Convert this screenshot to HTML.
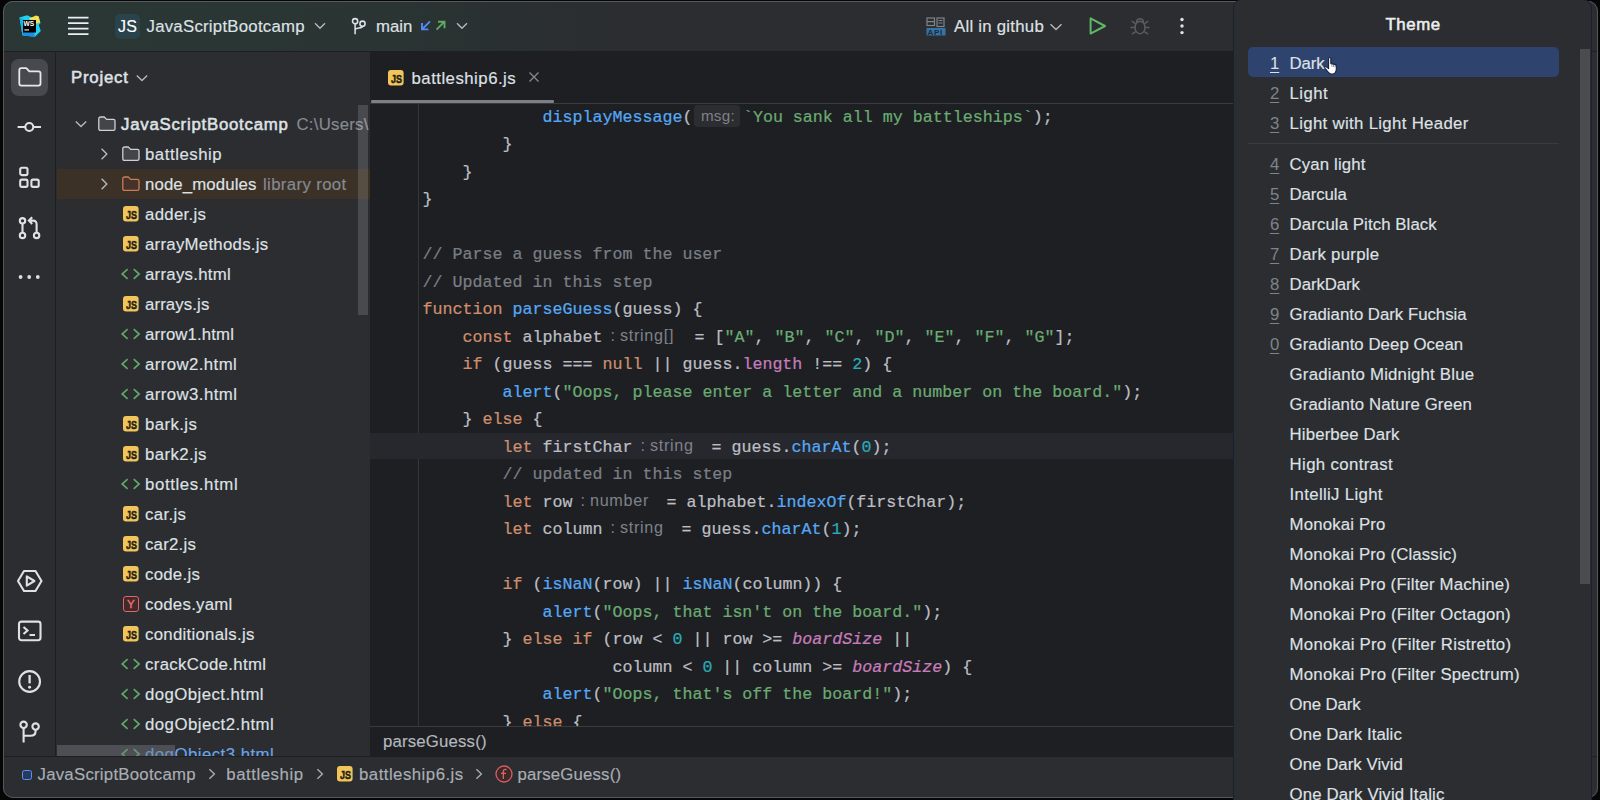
<!DOCTYPE html>
<html><head><meta charset="utf-8">
<style>
*{box-sizing:border-box;margin:0;padding:0}
html,body{width:1600px;height:800px;overflow:hidden;background:#060607;font-family:"Liberation Sans",sans-serif;}
body{position:relative}
.abs{position:absolute}
#win{position:absolute;left:0;top:0;width:1600px;height:800px;background:#1e1f22;clip-path:inset(1px 2px 2px 3px round 10px)}
#winborder{position:absolute;left:3px;top:1px;width:1595px;height:797px;border-radius:10px;border:1px solid rgba(120,124,128,0.55);pointer-events:none}
#title{position:absolute;left:0;top:0;width:1600px;height:51px;background:linear-gradient(90deg,#2a3735 0px,#2a3634 260px,#2a3433 400px,#2a3031 500px,#2b2e30 580px,#2b2d30 680px)}
#titleline{position:absolute;left:0;top:51px;width:1600px;height:1px;background:#1e1f22}
#strip{position:absolute;left:0;top:52px;width:56px;height:704px;background:#2b2d30;border-right:1px solid #1e1f22}
#proj{position:absolute;left:57px;top:52px;width:313px;box-shadow:-1px 0 0 #2b2d30;height:704px;background:#2b2d30;overflow:hidden}
#editor{position:absolute;left:370px;top:52px;width:1230px;height:704px;background:#1e1f22;overflow:hidden}
#status{position:absolute;left:0;top:756px;width:1600px;height:44px;background:#2b2d30;border-top:1px solid #1e1f22}
.ui{-webkit-text-stroke:0.16px currentColor;font-size:16.8px;letter-spacing:0.25px;color:#dfe1e5;white-space:nowrap;line-height:20px}
.sc{color:#a9adb5}
.b{-webkit-text-stroke:0.55px currentColor;font-weight:normal;letter-spacing:0.76px}
.row{position:absolute;left:0;height:30px;width:313px}
.row .t{position:absolute;top:5.5px}
.gray{color:#868a91}
.code{position:absolute;left:0;white-space:pre;-webkit-text-stroke:0.22px currentColor;font-family:"Liberation Mono",monospace;font-size:16.67px;line-height:27.5px;height:27.5px;color:#bcbec4}
.k{color:#cf8e6d}.f{color:#56a8f5}.s{color:#6aab73}.n{color:#2aacb8}.c{color:#7a7e85}.p{color:#c77dbb}.g{color:#c77dbb;font-style:italic}
.hint{display:inline-block;-webkit-text-stroke:0;font-family:"Liberation Sans",sans-serif;font-size:16.2px;letter-spacing:0.7px;color:#7e828a;vertical-align:top;height:27.5px;line-height:22.7px}
.hbox{display:inline-block;margin-left:2px;width:46px;height:21.6px;margin-top:1.65px;border-radius:4px;background:#2b2d30;font-size:15.2px;letter-spacing:0.3px;line-height:21.5px;padding-left:6.5px;vertical-align:top}
#popup{position:absolute;left:1233px;top:-1px;width:358.5px;height:820px;background:#2b2d30;border-radius:9px;border:1px solid #18212f;border-right-width:1.6px}
.ti{-webkit-text-stroke:0.16px currentColor;position:absolute;left:55.6px;font-size:16.8px;letter-spacing:0.18px;color:#dfe1e5;white-space:nowrap;line-height:20px}
.tn{position:absolute;left:34.6px;width:12px;text-align:center;font-size:16.8px;color:#7f838a;line-height:20px;text-decoration:underline;text-underline-offset:2.5px;text-decoration-thickness:1px}
</style></head><body>
<div id="win">
<div id="title">
<!-- WS logo -->
<svg class="abs" style="left:18px;top:14px" width="24" height="24" viewBox="0 0 24 24">
 <polygon points="1.5,3.5 9,1.2 14,3.5 20.5,2.2 22.5,9 20.8,11 22.8,17 17,22.8 4.5,21.5" fill="#21d0ee"/>
 <polygon points="11,4.5 18,1.6 20.5,2.2 22.3,8.5 17,10" fill="#f3e24d"/>
 <polygon points="3.5,15 16,18 17,22.8 4.5,21.5" fill="#1a8fe8"/>
 <polygon points="1.5,3.5 6,5 4.8,19 4.5,21.5" fill="#19b6dc"/>
 <rect x="5" y="6" width="13" height="12.5" fill="#000"/>
 <text x="5.6" y="12.3" font-family="Liberation Sans" font-weight="bold" font-size="6.6" fill="#fff">WS</text>
 <rect x="6.4" y="15.4" width="4.6" height="1.1" fill="#fff"/>
</svg>
<!-- hamburger -->
<svg class="abs" style="left:67px;top:15px" width="24" height="22" viewBox="0 0 24 22"><g stroke="#eceef1" stroke-width="1.9"><path d="M1 2.6H21.5M1 8.1H21.5M1 13.6H21.5M1 19.1H21.5"/></g></svg>
<!-- JS badge -->
<div class="abs" style="left:115px;top:14px;width:25px;height:25px;border-radius:5px;background:#2a434b"></div>
<div class="abs ui" style="left:118px;top:17px;font-size:16px;letter-spacing:0.2px;color:#fff">JS</div>
<div class="abs ui" id="t_proj" style="left:146.5px;top:17px;letter-spacing:0.25px">JavaScriptBootcamp</div>
<svg class="abs" style="left:312.7px;top:21px" width="14" height="10" viewBox="0 0 14 10"><path d="M2 2.3L7 7.3L12 2.3" fill="none" stroke="#b4b8bf" stroke-width="1.4"/></svg>
<!-- branch icon -->
<svg class="abs" style="left:350px;top:15px" width="20" height="22" viewBox="0 0 20 22"><g fill="none" stroke="#dfe1e5" stroke-width="1.55"><circle cx="5.1" cy="6.2" r="2.6"/><circle cx="12.5" cy="8.7" r="2.6"/><path d="M5.1 8.8V19.3M5.1 15C5.1 12.2 12.5 14 12.5 11.3"/></g></svg>
<div class="abs ui" id="t_main" style="left:376px;top:17px;letter-spacing:0px">main</div>
<svg class="abs" style="left:420px;top:19px" width="28" height="14" viewBox="0 0 28 14"><g fill="none" stroke-width="1.9"><path d="M10 2.4L2.5 9.9M2 4V10.4H8.4" stroke="#548af7"/><path d="M16.5 10.6L24 3.1M18 2.8H24.5V9.2" stroke="#5fa866"/></g></svg>
<svg class="abs" style="left:455px;top:21px" width="14" height="10" viewBox="0 0 14 10"><path d="M2 2.3L7 7.3L12 2.3" fill="none" stroke="#b4b8bf" stroke-width="1.4"/></svg>
<!-- API icon -->
<svg class="abs" style="left:926px;top:17px" width="20" height="19" viewBox="0 0 20 19"><g fill="none" stroke="#7f838a" stroke-width="1.2"><rect x="1" y="1" width="7.5" height="7.5"/><path d="M1 4.7H8.5"/><rect x="11" y="1" width="7" height="8.5"/><path d="M12.5 3.5H16.5M12.5 6H16.5"/></g><rect x="0.5" y="11" width="19" height="7.5" fill="#3574a6"/><text x="1.6" y="17.6" font-family="Liberation Sans" font-weight="bold" font-size="8" fill="#1f2b36" letter-spacing="0.6">API</text></svg>
<div class="abs ui" id="t_run" style="left:954px;top:17px;letter-spacing:0.25px">All in github</div>
<svg class="abs" style="left:1049px;top:22px" width="14" height="10" viewBox="0 0 14 10"><path d="M1.5 2.2L7 7.6L12.5 2.2" fill="none" stroke="#b4b8bf" stroke-width="1.4"/></svg>
<svg class="abs" style="left:1087px;top:15px" width="22" height="22" viewBox="0 0 22 22"><path d="M3.6 3.4V18.6L18 11Z" fill="none" stroke="#5fb865" stroke-width="2" stroke-linejoin="round"/></svg>
<svg class="abs" style="left:1128px;top:14px" width="24" height="24" viewBox="0 0 24 24"><g fill="none" stroke="#5a5d63" stroke-width="1.5"><ellipse cx="12" cy="13.5" rx="5" ry="6.2"/><path d="M8.5 8.5C8.5 3.5 15.5 3.5 15.5 8.5"/><path d="M7 13.5H2.5M17 13.5H21.5M7.6 9.8L3.8 7M16.4 9.8L20.2 7M7.8 17.5L4 20.2M16.2 17.5L20 20.2"/></g></svg>
<svg class="abs" style="left:1176px;top:14px" width="12" height="24" viewBox="0 0 12 24"><g fill="#dfe1e5"><circle cx="6" cy="5.5" r="1.7"/><circle cx="6" cy="12" r="1.7"/><circle cx="6" cy="18.6" r="1.7"/></g></svg>
</div><div id="titleline"></div>
<div id="strip">
<div class="abs" style="left:11px;top:7px;width:37px;height:37px;border-radius:8px;background:#47494e"></div>
<svg class="abs" style="left:17px;top:13px" width="26" height="24" viewBox="0 0 26 24"><path d="M2.3 5.2C2.3 4 3.2 3.2 4.3 3.2H9.3L12.3 6.3H21.5C22.7 6.3 23.5 7.2 23.5 8.3V18.6C23.5 19.8 22.7 20.6 21.5 20.6H4.3C3.2 20.6 2.3 19.8 2.3 18.6Z" fill="none" stroke="#e6e8ec" stroke-width="1.8" stroke-linejoin="round"/></svg>
<svg class="abs" style="left:17px;top:67px" width="26" height="16" viewBox="0 0 26 16"><g fill="none" stroke="#dfe1e5" stroke-width="2.1"><circle cx="12.3" cy="8" r="4"/><path d="M0.6 8H8.3M16.3 8H24"/></g></svg>
<svg class="abs" style="left:17px;top:113px" width="26" height="26" viewBox="0 0 26 26"><g fill="none" stroke="#dfe1e5" stroke-width="2.1"><rect x="3.2" y="2.8" width="7.3" height="7.3" rx="1.6"/><rect x="3.2" y="14.6" width="7.3" height="7.3" rx="1.6"/><rect x="14.4" y="14.6" width="7.3" height="7.3" rx="1.6"/></g></svg>
<svg class="abs" style="left:16px;top:163px" width="28" height="28" viewBox="0 0 28 28"><g fill="none" stroke="#dfe1e5" stroke-width="2.1"><circle cx="6.5" cy="5.8" r="2.7"/><circle cx="6.5" cy="20.4" r="2.7"/><circle cx="20.6" cy="20.4" r="2.7"/><path d="M6.5 8.5V17.7M20.6 17.7V9.2C20.6 6.8 19.2 5.6 17.2 5.6H13.2M16.2 2.3L12.9 5.6L16.2 8.9"/></g></svg>
<svg class="abs" style="left:17px;top:220px" width="26" height="10" viewBox="0 0 26 10"><g fill="#dcdee3"><circle cx="3.6" cy="5" r="1.9"/><circle cx="12.2" cy="5" r="1.9"/><circle cx="20.8" cy="5" r="1.9"/></g></svg>
<svg class="abs" style="left:16px;top:516px" width="28" height="26" viewBox="0 0 28 26"><g fill="none" stroke="#dfe1e5" stroke-width="2.1" stroke-linejoin="round"><path d="M8 3H19.5L25.5 13L19.5 23H8L2 13Z"/><path d="M10.8 8.3V17.7L18.4 13Z"/></g></svg>
<svg class="abs" style="left:17px;top:567px" width="26" height="24" viewBox="0 0 26 24"><g fill="none" stroke="#dfe1e5" stroke-width="2.1"><rect x="2" y="2.6" width="21.5" height="18.6" rx="2.4"/><path d="M6.5 8L10.5 11.5L6.5 15M12.5 16H18"/></g></svg>
<svg class="abs" style="left:16px;top:616px" width="28" height="28" viewBox="0 0 28 28"><g fill="none" stroke="#dfe1e5" stroke-width="2.1"><circle cx="13.6" cy="13.5" r="10.4"/><path d="M13.6 7V15.4" stroke-width="2.3"/></g><circle cx="13.6" cy="19.3" r="1.45" fill="#dfe1e5"/></svg>
<svg class="abs" style="left:18px;top:668px" width="24" height="24" viewBox="0 0 24 24"><g fill="none" stroke="#dfe1e5" stroke-width="2.1"><circle cx="5.6" cy="4.8" r="3.2"/><circle cx="17.6" cy="6.6" r="3.2"/><path d="M5.6 8V22.4M17.6 9.8V11C17.6 14 15.4 15.8 12.4 15.8H5.6"/></g></svg>
</div>
<div id="proj">
<div class="abs ui b" style="left:14px;top:16px">Project</div>
<svg class="abs" style="left:78px;top:20px" width="14" height="12" viewBox="0 0 14 12"><path d="M1.8 3.4L7 8.6L12.2 3.4" fill="none" stroke="#b4b8bf" stroke-width="1.4"/></svg>
<div class="row" style="top:57px">
<svg class="abs" style="left:17px;top:8px" width="14" height="14" viewBox="0 0 14 14"><path d="M1.8 4.4L7 9.6L12.2 4.4" fill="none" stroke="#b4b8bf" stroke-width="1.4"/></svg>
<svg class="abs" style="left:40px;top:5px" width="20" height="20" viewBox="0 0 20 20"><path d="M1.8 4.6C1.8 3.7 2.5 3 3.4 3H7.3L9.6 5.4H16.4C17.3 5.4 18 6.1 18 7V14.8C18 15.7 17.3 16.4 16.4 16.4H3.4C2.5 16.4 1.8 15.7 1.8 14.8Z" fill="#43454a" stroke="#ced0d6" stroke-width="1.3" stroke-linejoin="round"/></svg>
<div class="t ui b" style="left:64px">JavaScriptBootcamp</div><div class="t ui gray" style="left:239.5px">C:\Users\</div>
</div>
<div class="row" style="top:87px">
<svg class="abs" style="left:40px;top:8px" width="14" height="14" viewBox="0 0 14 14"><path d="M4.6 1.8L9.8 7L4.6 12.2" fill="none" stroke="#b4b8bf" stroke-width="1.4"/></svg>
<svg class="abs" style="left:64px;top:5px" width="20" height="20" viewBox="0 0 20 20"><path d="M1.8 4.6C1.8 3.7 2.5 3 3.4 3H7.3L9.6 5.4H16.4C17.3 5.4 18 6.1 18 7V14.8C18 15.7 17.3 16.4 16.4 16.4H3.4C2.5 16.4 1.8 15.7 1.8 14.8Z" fill="#43454a" stroke="#ced0d6" stroke-width="1.3" stroke-linejoin="round"/></svg>
<div class="t ui" style="left:88px;letter-spacing:0.54px">battleship</div>
</div>
<div class="row" style="top:117px;background:#3b3127;box-shadow:-1px 0 0 #3b3127">
<svg class="abs" style="left:40px;top:8px" width="14" height="14" viewBox="0 0 14 14"><path d="M4.6 1.8L9.8 7L4.6 12.2" fill="none" stroke="#b4b8bf" stroke-width="1.4"/></svg>
<svg class="abs" style="left:64px;top:5px" width="20" height="20" viewBox="0 0 20 20"><path d="M1.8 4.6C1.8 3.7 2.5 3 3.4 3H7.3L9.6 5.4H16.4C17.3 5.4 18 6.1 18 7V14.8C18 15.7 17.3 16.4 16.4 16.4H3.4C2.5 16.4 1.8 15.7 1.8 14.8Z" fill="#45322b" stroke="#c77d55" stroke-width="1.3" stroke-linejoin="round"/></svg>
<div class="t ui" style="left:88px;letter-spacing:0.12px">node_modules</div><div class="t ui gray" style="left:206px;letter-spacing:0.36px">library root</div>
</div>
<div class="row" style="top:147px">
<svg class="abs" style="left:66px;top:7px" width="16" height="16" viewBox="0 0 16 16"><rect width="15.6" height="15.6" rx="3" fill="#f2c55c"/><text x="3" y="12.5" font-family="Liberation Sans" font-weight="bold" font-size="11.4" textLength="11" lengthAdjust="spacingAndGlyphs" fill="#221d10" stroke="#221d10" stroke-width="0.45">JS</text></svg>
<div class="t ui" style="left:88px;letter-spacing:0.32px">adder.js</div>
</div>
<div class="row" style="top:177px">
<svg class="abs" style="left:66px;top:7px" width="16" height="16" viewBox="0 0 16 16"><rect width="15.6" height="15.6" rx="3" fill="#f2c55c"/><text x="3" y="12.5" font-family="Liberation Sans" font-weight="bold" font-size="11.4" textLength="11" lengthAdjust="spacingAndGlyphs" fill="#221d10" stroke="#221d10" stroke-width="0.45">JS</text></svg>
<div class="t ui" style="left:88px;letter-spacing:0.27px">arrayMethods.js</div>
</div>
<div class="row" style="top:207px">
<svg class="abs" style="left:63.4px;top:5px" width="22" height="20" viewBox="0 0 22 20"><path d="M7.6 5.2L2.2 10L7.6 14.8M13.7 5.2L19.1 10L13.7 14.8" fill="none" stroke="#5fa866" stroke-width="1.7"/></svg>
<div class="t ui" style="left:88px;letter-spacing:0.27px">arrays.html</div>
</div>
<div class="row" style="top:237px">
<svg class="abs" style="left:66px;top:7px" width="16" height="16" viewBox="0 0 16 16"><rect width="15.6" height="15.6" rx="3" fill="#f2c55c"/><text x="3" y="12.5" font-family="Liberation Sans" font-weight="bold" font-size="11.4" textLength="11" lengthAdjust="spacingAndGlyphs" fill="#221d10" stroke="#221d10" stroke-width="0.45">JS</text></svg>
<div class="t ui" style="left:88px;letter-spacing:0.11px">arrays.js</div>
</div>
<div class="row" style="top:267px">
<svg class="abs" style="left:63.4px;top:5px" width="22" height="20" viewBox="0 0 22 20"><path d="M7.6 5.2L2.2 10L7.6 14.8M13.7 5.2L19.1 10L13.7 14.8" fill="none" stroke="#5fa866" stroke-width="1.7"/></svg>
<div class="t ui" style="left:88px;letter-spacing:0.13px">arrow1.html</div>
</div>
<div class="row" style="top:297px">
<svg class="abs" style="left:63.4px;top:5px" width="22" height="20" viewBox="0 0 22 20"><path d="M7.6 5.2L2.2 10L7.6 14.8M13.7 5.2L19.1 10L13.7 14.8" fill="none" stroke="#5fa866" stroke-width="1.7"/></svg>
<div class="t ui" style="left:88px;letter-spacing:0.41px">arrow2.html</div>
</div>
<div class="row" style="top:327px">
<svg class="abs" style="left:63.4px;top:5px" width="22" height="20" viewBox="0 0 22 20"><path d="M7.6 5.2L2.2 10L7.6 14.8M13.7 5.2L19.1 10L13.7 14.8" fill="none" stroke="#5fa866" stroke-width="1.7"/></svg>
<div class="t ui" style="left:88px;letter-spacing:0.43px">arrow3.html</div>
</div>
<div class="row" style="top:357px">
<svg class="abs" style="left:66px;top:7px" width="16" height="16" viewBox="0 0 16 16"><rect width="15.6" height="15.6" rx="3" fill="#f2c55c"/><text x="3" y="12.5" font-family="Liberation Sans" font-weight="bold" font-size="11.4" textLength="11" lengthAdjust="spacingAndGlyphs" fill="#221d10" stroke="#221d10" stroke-width="0.45">JS</text></svg>
<div class="t ui" style="left:88px;letter-spacing:0.39px">bark.js</div>
</div>
<div class="row" style="top:387px">
<svg class="abs" style="left:66px;top:7px" width="16" height="16" viewBox="0 0 16 16"><rect width="15.6" height="15.6" rx="3" fill="#f2c55c"/><text x="3" y="12.5" font-family="Liberation Sans" font-weight="bold" font-size="11.4" textLength="11" lengthAdjust="spacingAndGlyphs" fill="#221d10" stroke="#221d10" stroke-width="0.45">JS</text></svg>
<div class="t ui" style="left:88px;letter-spacing:0.39px">bark2.js</div>
</div>
<div class="row" style="top:417px">
<svg class="abs" style="left:63.4px;top:5px" width="22" height="20" viewBox="0 0 22 20"><path d="M7.6 5.2L2.2 10L7.6 14.8M13.7 5.2L19.1 10L13.7 14.8" fill="none" stroke="#5fa866" stroke-width="1.7"/></svg>
<div class="t ui" style="left:88px;letter-spacing:0.62px">bottles.html</div>
</div>
<div class="row" style="top:447px">
<svg class="abs" style="left:66px;top:7px" width="16" height="16" viewBox="0 0 16 16"><rect width="15.6" height="15.6" rx="3" fill="#f2c55c"/><text x="3" y="12.5" font-family="Liberation Sans" font-weight="bold" font-size="11.4" textLength="11" lengthAdjust="spacingAndGlyphs" fill="#221d10" stroke="#221d10" stroke-width="0.45">JS</text></svg>
<div class="t ui" style="left:88px;letter-spacing:0.36px">car.js</div>
</div>
<div class="row" style="top:477px">
<svg class="abs" style="left:66px;top:7px" width="16" height="16" viewBox="0 0 16 16"><rect width="15.6" height="15.6" rx="3" fill="#f2c55c"/><text x="3" y="12.5" font-family="Liberation Sans" font-weight="bold" font-size="11.4" textLength="11" lengthAdjust="spacingAndGlyphs" fill="#221d10" stroke="#221d10" stroke-width="0.45">JS</text></svg>
<div class="t ui" style="left:88px;letter-spacing:0.23px">car2.js</div>
</div>
<div class="row" style="top:507px">
<svg class="abs" style="left:66px;top:7px" width="16" height="16" viewBox="0 0 16 16"><rect width="15.6" height="15.6" rx="3" fill="#f2c55c"/><text x="3" y="12.5" font-family="Liberation Sans" font-weight="bold" font-size="11.4" textLength="11" lengthAdjust="spacingAndGlyphs" fill="#221d10" stroke="#221d10" stroke-width="0.45">JS</text></svg>
<div class="t ui" style="left:88px;letter-spacing:0.27px">code.js</div>
</div>
<div class="row" style="top:537px">
<div class="abs" style="left:66px;top:7px;width:15.8px;height:15.6px;border-radius:3px;background:#43292a;border:1.4px solid #e0666a"></div><div class="abs" style="left:69.9px;top:8.4px;font-size:11.6px;color:#f2757a;line-height:13px;-webkit-text-stroke:0.3px #f2757a">Y</div>
<div class="t ui" style="left:88px;letter-spacing:0.27px">codes.yaml</div>
</div>
<div class="row" style="top:567px">
<svg class="abs" style="left:66px;top:7px" width="16" height="16" viewBox="0 0 16 16"><rect width="15.6" height="15.6" rx="3" fill="#f2c55c"/><text x="3" y="12.5" font-family="Liberation Sans" font-weight="bold" font-size="11.4" textLength="11" lengthAdjust="spacingAndGlyphs" fill="#221d10" stroke="#221d10" stroke-width="0.45">JS</text></svg>
<div class="t ui" style="left:88px;letter-spacing:0.28px">conditionals.js</div>
</div>
<div class="row" style="top:597px">
<svg class="abs" style="left:63.4px;top:5px" width="22" height="20" viewBox="0 0 22 20"><path d="M7.6 5.2L2.2 10L7.6 14.8M13.7 5.2L19.1 10L13.7 14.8" fill="none" stroke="#5fa866" stroke-width="1.7"/></svg>
<div class="t ui" style="left:88px;letter-spacing:0.34px">crackCode.html</div>
</div>
<div class="row" style="top:627px">
<svg class="abs" style="left:63.4px;top:5px" width="22" height="20" viewBox="0 0 22 20"><path d="M7.6 5.2L2.2 10L7.6 14.8M13.7 5.2L19.1 10L13.7 14.8" fill="none" stroke="#5fa866" stroke-width="1.7"/></svg>
<div class="t ui" style="left:88px;letter-spacing:0.44px">dogObject.html</div>
</div>
<div class="row" style="top:657px">
<svg class="abs" style="left:63.4px;top:5px" width="22" height="20" viewBox="0 0 22 20"><path d="M7.6 5.2L2.2 10L7.6 14.8M13.7 5.2L19.1 10L13.7 14.8" fill="none" stroke="#5fa866" stroke-width="1.7"/></svg>
<div class="t ui" style="left:88px;letter-spacing:0.47px">dogObject2.html</div>
</div>
<div class="row" style="top:687px">
<svg class="abs" style="left:63.4px;top:5px" width="22" height="20" viewBox="0 0 22 20"><path d="M7.6 5.2L2.2 10L7.6 14.8M13.7 5.2L19.1 10L13.7 14.8" fill="none" stroke="#5fa866" stroke-width="1.7"/></svg>
<div class="t ui" style="left:88px;color:#6aa6ea;letter-spacing:0.47px">dogObject3.html</div>
</div>
<div class="abs" style="left:301px;top:53px;width:10px;height:210px;background:rgba(255,255,255,0.14)"></div>
<div class="abs" style="left:0px;top:693px;width:118px;height:12px;background:rgba(120,122,128,0.45)"></div>
</div>
<div id="editor">
<svg class="abs" style="left:18px;top:18px" width="16" height="16" viewBox="0 0 16 16"><rect width="15.6" height="15.6" rx="3" fill="#f2c55c"/><text x="3" y="12.5" font-family="Liberation Sans" font-weight="bold" font-size="11.4" textLength="11" lengthAdjust="spacingAndGlyphs" fill="#221d10" stroke="#221d10" stroke-width="0.45">JS</text></svg>
<div class="abs ui" style="left:41.5px;top:16.5px;letter-spacing:0.48px">battleship6.js</div>
<svg class="abs" style="left:157px;top:18px" width="14" height="14" viewBox="0 0 14 14"><path d="M2.5 2.5L11.5 11.5M11.5 2.5L2.5 11.5" stroke="#868a91" stroke-width="1.3"/></svg>
<div class="abs" style="left:0;top:51px;width:1220px;height:1px;background:#393b40"></div>
<div class="abs" style="left:1px;top:48px;width:183px;height:3.4px;background:#7c7f86;border-radius:1px"></div>
<div class="abs" style="left:48px;top:52px;width:1px;height:622px;background:#34363a"></div>
<div class="abs" style="left:0;top:380.6px;width:1230px;height:26.4px;background:#26282e"></div>
<div class="code" style="left:52.5px;top:51.65px">            <span class="f">displayMessage</span>(<span class="hint" style="width:50.5px"><span class="hbox">msg:</span></span><span class="s">`You sank all my battleships`</span>);</div>
<div class="code" style="left:52.5px;top:79.15px">        }</div>
<div class="code" style="left:52.5px;top:106.65px">    }</div>
<div class="code" style="left:52.5px;top:134.15px">}</div>
<div class="code" style="left:52.5px;top:189.15px"><span class="c">// Parse a guess from the user</span></div>
<div class="code" style="left:52.5px;top:216.65px"><span class="c">// Updated in this step</span></div>
<div class="code" style="left:52.5px;top:244.15px"><span class="k">function</span> <span class="f">parseGuess</span>(guess) {</div>
<div class="code" style="left:52.5px;top:271.65px">    <span class="k">const</span> alphabet<span class="hint" style="width:82px;padding-left:8px"><span style="margin-right:4.3px">:</span>string[]</span> = [<span class="s">"A"</span>, <span class="s">"B"</span>, <span class="s">"C"</span>, <span class="s">"D"</span>, <span class="s">"E"</span>, <span class="s">"F"</span>, <span class="s">"G"</span>];</div>
<div class="code" style="left:52.5px;top:299.15px">    <span class="k">if</span> (guess === <span class="k">null</span> || guess.<span class="p">length</span> !== <span class="n">2</span>) {</div>
<div class="code" style="left:52.5px;top:326.65px">        <span class="f">alert</span>(<span class="s">"Oops, please enter a letter and a number on the board."</span>);</div>
<div class="code" style="left:52.5px;top:354.15px">    } <span class="k">else</span> {</div>
<div class="code" style="left:52.5px;top:381.65px">        <span class="k">let</span> firstChar<span class="hint" style="width:69px;padding-left:8px"><span style="margin-right:4.3px">:</span>string</span> = guess.<span class="f">charAt</span>(<span class="n">0</span>);</div>
<div class="code" style="left:52.5px;top:409.15px">        <span class="c">// updated in this step</span></div>
<div class="code" style="left:52.5px;top:436.65px">        <span class="k">let</span> row<span class="hint" style="width:84px;padding-left:8px"><span style="margin-right:4.3px">:</span>number</span> = alphabet.<span class="f">indexOf</span>(firstChar);</div>
<div class="code" style="left:52.5px;top:464.15px">        <span class="k">let</span> column<span class="hint" style="width:69px;padding-left:8px"><span style="margin-right:4.3px">:</span>string</span> = guess.<span class="f">charAt</span>(<span class="n">1</span>);</div>
<div class="code" style="left:52.5px;top:519.15px">        <span class="k">if</span> (<span class="f">isNaN</span>(row) || <span class="f">isNaN</span>(column)) {</div>
<div class="code" style="left:52.5px;top:546.65px">            <span class="f">alert</span>(<span class="s">"Oops, that isn't on the board."</span>);</div>
<div class="code" style="left:52.5px;top:574.15px">        } <span class="k">else if</span> (row &lt; <span class="n">0</span> || row &gt;= <span class="g">boardSize</span> ||</div>
<div class="code" style="left:52.5px;top:601.65px">                   column &lt; <span class="n">0</span> || column &gt;= <span class="g">boardSize</span>) {</div>
<div class="code" style="left:52.5px;top:629.15px">            <span class="f">alert</span>(<span class="s">"Oops, that's off the board!"</span>);</div>
<div class="code" style="left:52.5px;top:656.65px">        } <span class="k">else</span> {</div>
<div class="abs" style="left:0;top:674px;width:1230px;height:31px;background:#1e1f22;border-top:1px solid #393b40"></div>
<div class="abs ui" style="left:13px;top:679.5px;color:#b4b7bd;letter-spacing:0.17px">parseGuess()</div>
</div>
<div class="abs" style="left:1545px;top:52px;width:55px;height:704px;background:#2b2d30;border-left:1px solid #1e1f22"></div>
<div id="status">
<div class="abs" style="left:22px;top:13px;width:10px;height:10px;border-radius:2.5px;border:1.8px solid #5a94f8;background:#273a5e"></div>
<div class="abs ui sc" style="left:37.5px;top:8px;letter-spacing:0.25px">JavaScriptBootcamp</div>
<svg class="abs" style="left:205.5px;top:10px" width="12" height="14" viewBox="0 0 12 14"><path d="M3.4 2.2L8.4 7L3.4 11.8" fill="none" stroke="#a8adb5" stroke-width="1.4"/></svg>
<div class="abs ui sc" style="left:226.3px;top:8px;letter-spacing:0.54px">battleship</div>
<svg class="abs" style="left:313.5px;top:10px" width="12" height="14" viewBox="0 0 12 14"><path d="M3.4 2.2L8.4 7L3.4 11.8" fill="none" stroke="#a8adb5" stroke-width="1.4"/></svg>
<svg class="abs" style="left:337px;top:9px" width="16" height="16" viewBox="0 0 16 16"><rect width="15.6" height="15.6" rx="3" fill="#f2c55c"/><text x="3" y="12.5" font-family="Liberation Sans" font-weight="bold" font-size="11.4" textLength="11" lengthAdjust="spacingAndGlyphs" fill="#221d10" stroke="#221d10" stroke-width="0.45">JS</text></svg>
<div class="abs ui sc" style="left:359px;top:8px;letter-spacing:0.48px">battleship6.js</div>
<svg class="abs" style="left:473px;top:10px" width="12" height="14" viewBox="0 0 12 14"><path d="M3.4 2.2L8.4 7L3.4 11.8" fill="none" stroke="#a8adb5" stroke-width="1.4"/></svg>
<svg class="abs" style="left:494px;top:7px" width="20" height="20" viewBox="0 0 20 20"><circle cx="10" cy="10" r="8" fill="#3a2a2c" stroke="#db5c5c" stroke-width="1.3"/><path d="M12.6 5.6C10.3 4.9 9.3 6.2 9.3 7.8V15M7 9.3H12" fill="none" stroke="#e0645f" stroke-width="1.3"/></svg>
<div class="abs ui sc" style="left:517.5px;top:8px;letter-spacing:0.17px">parseGuess()</div>
</div>
</div>
<div id="winborder"></div>
<div id="popup">
<div class="abs ui b" style="left:1.6px;width:355px;text-align:center;top:14.6px;letter-spacing:0.62px;color:#eceef1">Theme</div>
<div class="abs" style="left:14px;top:47px;width:311px;height:30px;border-radius:5px;background:#2e436e"></div>
<div class="abs" style="left:14px;top:142.5px;width:311px;height:1px;background:#393b40"></div>
<div class="tn" style="top:53.5px;color:#dfe1e5">1</div>
<div class="ti" style="top:53.5px;letter-spacing:-0.12px">Dark</div>
<div class="tn" style="top:83.5px;color:#7f838a">2</div>
<div class="ti" style="top:83.5px;letter-spacing:0.39px">Light</div>
<div class="tn" style="top:113.5px;color:#7f838a">3</div>
<div class="ti" style="top:113.5px;letter-spacing:0.32px">Light with Light Header</div>
<div class="tn" style="top:154.9px;color:#7f838a">4</div>
<div class="ti" style="top:154.9px;letter-spacing:0.12px">Cyan light</div>
<div class="tn" style="top:184.9px;color:#7f838a">5</div>
<div class="ti" style="top:184.9px;letter-spacing:-0.1px">Darcula</div>
<div class="tn" style="top:214.9px;color:#7f838a">6</div>
<div class="ti" style="top:214.9px;letter-spacing:0.09px">Darcula Pitch Black</div>
<div class="tn" style="top:244.9px;color:#7f838a">7</div>
<div class="ti" style="top:244.9px;letter-spacing:0.28px">Dark purple</div>
<div class="tn" style="top:274.9px;color:#7f838a">8</div>
<div class="ti" style="top:274.9px;letter-spacing:-0.08px">DarkDark</div>
<div class="tn" style="top:304.9px;color:#7f838a">9</div>
<div class="ti" style="top:304.9px;letter-spacing:-0.01px">Gradianto Dark Fuchsia</div>
<div class="tn" style="top:334.9px;color:#7f838a">0</div>
<div class="ti" style="top:334.9px;letter-spacing:0.05px">Gradianto Deep Ocean</div>
<div class="ti" style="top:364.9px;letter-spacing:0.2px">Gradianto Midnight Blue</div>
<div class="ti" style="top:394.9px;letter-spacing:0.1px">Gradianto Nature Green</div>
<div class="ti" style="top:424.9px;letter-spacing:0.13px">Hiberbee Dark</div>
<div class="ti" style="top:454.9px;letter-spacing:0.35px">High contrast</div>
<div class="ti" style="top:484.9px;letter-spacing:0.33px">IntelliJ Light</div>
<div class="ti" style="top:514.9px;letter-spacing:0.15px">Monokai Pro</div>
<div class="ti" style="top:544.9px;letter-spacing:0.16px">Monokai Pro (Classic)</div>
<div class="ti" style="top:574.9px;letter-spacing:0.18px">Monokai Pro (Filter Machine)</div>
<div class="ti" style="top:604.9px;letter-spacing:0.21px">Monokai Pro (Filter Octagon)</div>
<div class="ti" style="top:634.9px;letter-spacing:0.24px">Monokai Pro (Filter Ristretto)</div>
<div class="ti" style="top:664.9px;letter-spacing:0.22px">Monokai Pro (Filter Spectrum)</div>
<div class="ti" style="top:694.9px;letter-spacing:-0.1px">One Dark</div>
<div class="ti" style="top:724.9px;letter-spacing:0.09px">One Dark Italic</div>
<div class="ti" style="top:754.9px;letter-spacing:0.05px">One Dark Vivid</div>
<div class="ti" style="top:784.9px;letter-spacing:0.15px">One Dark Vivid Italic</div>
<div class="abs" style="left:346px;top:48.5px;width:9.5px;height:535px;background:rgba(255,255,255,0.15)"></div>
</div>
<svg class="abs" style="left:1323px;top:56px" width="16" height="20" viewBox="0 0 16 20"><path d="M5.6 2.6C5.6 1.2 7.8 1.2 7.8 2.6V7.6L11.8 8.4C12.8 8.6 13.3 9.2 13.3 10.2V13.2C13.3 15.5 11.8 18 9.6 18H8.4C7 18 6.2 17.4 5.4 16.4L1.8 12C1.2 11.2 2.4 10.1 3.3 10.9L5.6 12.6Z" fill="#fff" stroke="#16203a" stroke-width="1.1" stroke-linejoin="round"/><path d="M8.9 8.6V10.8M10.5 9V11M12 9.6V11.2" stroke="#4a4f5c" stroke-width="0.6"/></svg>
</body></html>
